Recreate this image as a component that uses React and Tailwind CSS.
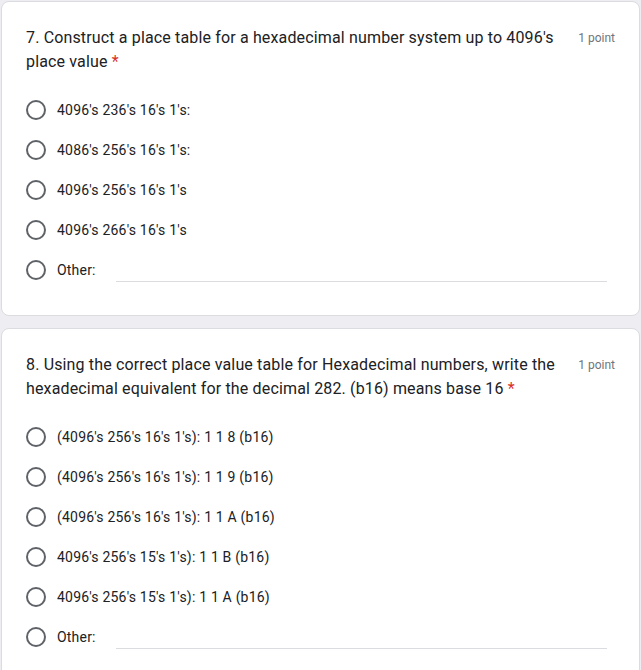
import React from "react";

const Radio = () => (
  <div className="w-5 h-5 rounded-full border-2 border-[#5f6368] shrink-0"></div>
);

const Option = ({ label }) => (
  <div className="flex items-center h-10">
    <Radio />
    <span className="ml-[11px] text-[14px] tracking-[0.2px] text-[#202124]">{label}</span>
  </div>
);

const OtherOption = () => (
  <div className="flex items-center h-10">
    <Radio />
    <span className="ml-[11px] text-[14px] tracking-[0.2px] text-[#202124]">Other:</span>
    <div className="ml-5 mr-2 flex-1 h-5 mt-[4px] border-b border-[#dadce0]"></div>
  </div>
);

const QuestionCard = ({ title, options }) => (
  <div className="bg-white rounded-lg border border-[#dadce0] px-6 pt-6 pb-[25px]">
    <div className="flex items-start">
      <div className="flex-1 pr-1 text-[16px] leading-6 text-[#202124] tracking-[0.15px]">
        {title} <span className="text-[#d93025]">*</span>
      </div>
      <div className="text-[12px] leading-6 text-[#70757a] shrink-0">1 point</div>
    </div>
    <div className="mt-4">
      {options.map((o) => (
        <Option key={o} label={o} />
      ))}
      <OtherOption />
    </div>
  </div>
);

export default function App() {
  return (
    <div className="min-h-screen bg-[#ededf2] px-px pt-px font-[Roboto,_'Liberation_Sans',_sans-serif]">
      <div className="flex flex-col gap-[12px]">
        <QuestionCard
          title="7. Construct a place table for a hexadecimal number system up to 4096's place value"
          options={[
            "4096's 236's 16's 1's:",
            "4086's 256's 16's 1's:",
            "4096's 256's 16's 1's",
            "4096's 266's 16's 1's",
          ]}
        />
        <QuestionCard
          title="8. Using the correct place value table for Hexadecimal numbers, write the hexadecimal equivalent for the decimal 282. (b16) means base 16"
          options={[
            "(4096's 256's 16's 1's): 1 1 8 (b16)",
            "(4096's 256's 16's 1's): 1 1 9 (b16)",
            "(4096's 256's 16's 1's): 1 1 A (b16)",
            "4096's 256's 15's 1's): 1 1 B (b16)",
            "4096's 256's 15's 1's): 1 1 A (b16)",
          ]}
        />
      </div>
    </div>
  );
}
